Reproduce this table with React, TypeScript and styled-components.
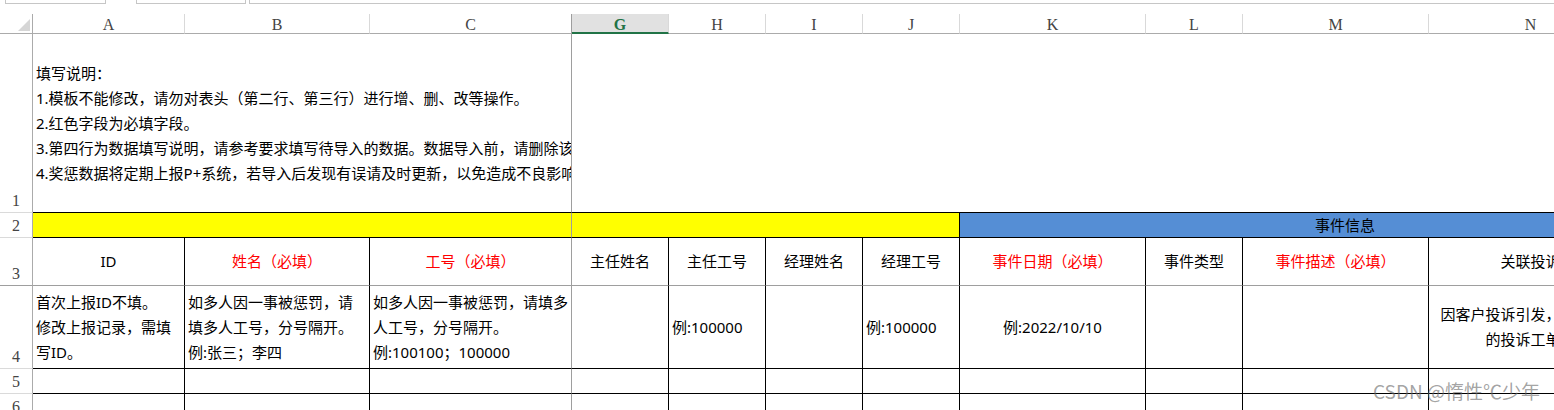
import React from 'react';
import styled, { createGlobalStyle } from 'styled-components';

type LineKind = 'none' | 'black' | 'freeze' | 'light';

const LINE: Record<LineKind, string> = {
  none: 'transparent',
  black: '#000000',
  freeze: '#9e9e9e',
  light: '#dadada',
};

const COLS = [33, 152, 185, 202, 97, 97, 97, 97, 186, 97, 186, 204, 98];

const GlobalStyle = createGlobalStyle`
  html, body { margin: 0; padding: 0; background: #fff; overflow: hidden; }
  #root { width: 1554px; height: 410px; }
`;

const Page = styled.div`
  position: relative;
  width: 1554px;
  height: 410px;
  overflow: hidden;
  background: #fff;
`;

const TabStrip = styled.div`
  display: flex;
  height: 14px;
`;

const Tab = styled.div<{ $offset: number; $width?: number }>`
  margin-left: ${(p) => p.$offset}px;
  ${(p) => (p.$width ? `width: ${p.$width}px;` : 'flex: 1; margin-right: -10px;')}
  height: 3px;
  border: 1px solid #c6c6c6;
  border-top: none;
  box-sizing: content-box;
`;

const Sheet = styled.div`
  display: grid;
  grid-template-columns: ${COLS.map((c) => `${c}px`).join(' ')};
  grid-template-rows: 20px 179px 25px 48px 83px 25px 25px;
  width: max-content;
  font-family: 'Noto Sans', 'Noto Sans CJK SC', sans-serif;
  font-size: 15px;
  color: #000;
`;

const Corner = styled.div`
  box-sizing: border-box;
  border-right: 1px solid #ababab;
  border-bottom: 1px solid #ababab;
  display: flex;
  align-items: flex-end;
  justify-content: flex-end;
  padding: 0 2px 2px 0;
`;

const ColHead = styled.div<{ $active?: boolean; $freeze?: boolean }>`
  box-sizing: border-box;
  border-right: 1px solid ${(p) => (p.$freeze ? LINE.freeze : '#d9d9d9')};
  border-bottom: ${(p) => (p.$active ? '2px solid #217346' : '1px solid #ababab')};
  background: ${(p) => (p.$active ? '#e1e1e1' : '#fff')};
  color: ${(p) => (p.$active ? '#217346' : '#444')};
  font-family: 'Liberation Serif', 'DejaVu Serif', serif;
  font-size: 16px;
  font-weight: ${(p) => (p.$active ? 700 : 400)};
  display: flex;
  align-items: center;
  justify-content: center;
  padding-top: ${(p) => (p.$active ? 4 : 3)}px;
`;

const RowHead = styled.div<{ $freeze?: boolean }>`
  box-sizing: border-box;
  border-right: 1px solid #ababab;
  border-bottom: 1px solid ${(p) => (p.$freeze ? LINE.freeze : LINE.light)};
  font-family: 'Liberation Serif', 'DejaVu Serif', serif;
  font-size: 16px;
  line-height: 17px;
  color: #444;
  display: flex;
  align-items: flex-end;
  justify-content: center;
  padding-bottom: 3px;
`;

const Cell = styled.div<{
  $span?: number;
  $r?: LineKind;
  $b?: LineKind;
  $bg?: string;
  $center?: boolean;
  $red?: boolean;
}>`
  box-sizing: border-box;
  grid-column: span ${(p) => p.$span ?? 1};
  border-right: 1px solid ${(p) => LINE[p.$r ?? 'black']};
  border-bottom: 1px solid ${(p) => LINE[p.$b ?? 'black']};
  background: ${(p) => p.$bg ?? '#fff'};
  display: flex;
  flex-direction: column;
  justify-content: center;
  align-items: ${(p) => (p.$center ? 'center' : 'flex-start')};
  padding: 0 3px;
  line-height: 25px;
  white-space: nowrap;
  overflow: hidden;
  color: ${(p) => (p.$red ? '#ff0000' : '#000')};
`;

const TextLine = styled.span`
  display: block;
`;

const Watermark = styled.div`
  position: absolute;
  left: 1373px;
  top: 378px;
  font-family: 'Noto Sans CJK SC', sans-serif;
  font-size: 19px;
  line-height: 26px;
  color: rgba(105, 105, 105, 0.62);
  white-space: nowrap;
  pointer-events: none;
`;

const LETTERS = ['A', 'B', 'C', 'G', 'H', 'I', 'J', 'K', 'L', 'M', 'N', 'O'];

const HEADERS: { text: string; red?: boolean }[] = [
  { text: 'ID' },
  { text: '姓名（必填）', red: true },
  { text: '工号（必填）', red: true },
  { text: '主任姓名' },
  { text: '主任工号' },
  { text: '经理姓名' },
  { text: '经理工号' },
  { text: '事件日期（必填）', red: true },
  { text: '事件类型' },
  { text: '事件描述（必填）', red: true },
  { text: '关联投诉' },
  { text: '' },
];

const ROW4: { lines: string[]; center?: boolean }[] = [
  { lines: ['首次上报ID不填。', '修改上报记录，需填', '写ID。'] },
  { lines: ['如多人因一事被惩罚，请', '填多人工号，分号隔开。', '例:张三；李四'] },
  { lines: ['如多人因一事被惩罚，请填多', '人工号，分号隔开。', '例:100100；100000'] },
  { lines: [] },
  { lines: ['例:100000'] },
  { lines: [] },
  { lines: ['例:100000'] },
  { lines: ['例:2022/10/10'], center: true },
  { lines: [] },
  { lines: [] },
  { lines: ['因客户投诉引发，请填关联', '的投诉工单号'], center: true },
  { lines: [] },
];

const NOTES = [
  '填写说明：',
  '1.模板不能修改，请勿对表头（第二行、第三行）进行增、删、改等操作。',
  '2.红色字段为必填字段。',
  '3.第四行为数据填写说明，请参考要求填写待导入的数据。数据导入前，请删除该行。',
  '4.奖惩数据将定期上报P+系统，若导入后发现有误请及时更新，以免造成不良影响。',
];

const rightOf = (i: number): LineKind => (i === 2 ? 'freeze' : 'black');

export default function App() {
  return (
    <Page>
      <GlobalStyle />
      <TabStrip>
        <Tab $offset={5} $width={99} />
        <Tab $offset={30} $width={108} />
        <Tab $offset={3} />
      </TabStrip>
      <Sheet>
        <Corner>
          <svg width="12" height="12" viewBox="0 0 12 12">
            <polygon points="12,0 12,12 0,12" fill="#d6d6d6" />
          </svg>
        </Corner>
        {LETTERS.map((l, i) => (
          <ColHead key={l} $active={l === 'G'} $freeze={i === 2}>
            {l}
          </ColHead>
        ))}

        <RowHead>1</RowHead>
        <Cell $span={3} $r="freeze">
          {NOTES.map((n) => (
            <TextLine key={n}>{n}</TextLine>
          ))}
        </Cell>
        <Cell $span={9} $r="none" />

        <RowHead>2</RowHead>
        <Cell $span={3} $r="freeze" $bg="#ffff00" />
        <Cell $span={4} $bg="#ffff00" />
        <Cell $span={5} $bg="#558ed5" $center>
          事件信息
        </Cell>

        <RowHead $freeze>3</RowHead>
        {HEADERS.map((h, i) => (
          <Cell key={i} $b="freeze" $r={rightOf(i)} $center $red={h.red}>
            {h.text}
          </Cell>
        ))}

        <RowHead>4</RowHead>
        {ROW4.map((c, i) => (
          <Cell key={i} $r={rightOf(i)} $center={c.center}>
            {c.lines.map((t) => (
              <TextLine key={t}>{t}</TextLine>
            ))}
          </Cell>
        ))}

        <RowHead>5</RowHead>
        {LETTERS.map((l, i) => (
          <Cell key={l} $r={rightOf(i)} />
        ))}

        <RowHead>6</RowHead>
        {LETTERS.map((l, i) => (
          <Cell key={l} $r={rightOf(i)} />
        ))}
      </Sheet>
      <Watermark>CSDN @惰性℃少年</Watermark>
    </Page>
  );
}
